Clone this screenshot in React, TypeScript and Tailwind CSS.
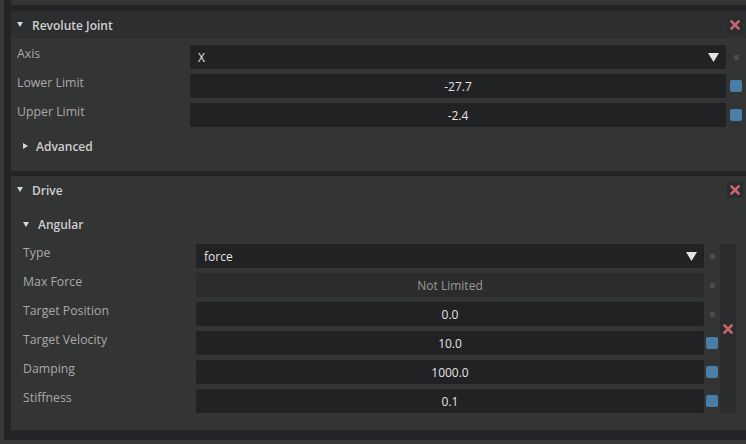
import React from 'react';

const CloseIcon = ({ boxed = true }: { boxed?: boolean }) => (
  <div
    className={`w-[16px] h-[16px] flex items-center justify-center rounded-[2px] ${boxed ? 'bg-[#2a2b2c]' : ''}`}
  >
    <svg width="10" height="10" viewBox="0 0 10 10">
      <path d="M1.5 1.5 L8.5 8.5 M8.5 1.5 L1.5 8.5" stroke="#c7636c" strokeWidth="2.6" strokeLinecap="square" />
    </svg>
  </div>
);

const CaretDown = () => (
  <svg width="6" height="5" viewBox="0 0 6 5">
    <path d="M0 0 L6 0 L3 5 Z" fill="#d8d8d8" />
  </svg>
);

const CaretRight = () => (
  <svg width="5" height="6" viewBox="0 0 5 6">
    <path d="M0 0 L5 3 L0 6 Z" fill="#d8d8d8" />
  </svg>
);

const SelectArrow = () => (
  <svg width="11" height="9" viewBox="0 0 11 9">
    <path d="M0 0 L11 0 L5.5 9 Z" fill="#e2e2e2" />
  </svg>
);

const Indicator = ({ on }: { on: boolean }) =>
  on ? (
    <div className="w-[12px] h-[12px] rounded-[2px] bg-[#4a7fa7]" />
  ) : (
    <div className="w-[5px] h-[5px] rounded-[1px] bg-[#4b4c4c]" />
  );

type Field = {
  label: string;
  value: string;
  kind: 'select' | 'number' | 'disabled';
  on: boolean;
};

const FieldRow = ({ f, pad, labelW, col }: { f: Field; pad: string; labelW: string; col: string }) => (
  <div className={`flex h-[24px] ${pad}`}>
    <div className={`${labelW} shrink-0 text-[#a9a9a9] leading-[17px] text-[12.3px]`}>{f.label}</div>
    <div
      className={`flex-1 flex items-center rounded-[2px] ${
        f.kind === 'disabled' ? 'bg-[#2c2c2c]' : 'bg-[#212223]'
      } ${f.kind === 'select' ? 'pl-[8px] pr-[7px] justify-between' : 'justify-center'}`}
    >
      <span className={`pt-[2px] ${f.kind === 'disabled' ? 'text-[#9a9a9a]' : 'text-[#e4e4e4]'}`}>{f.value}</span>
      {f.kind === 'select' && <SelectArrow />}
    </div>
    <div className={`${col} shrink-0 flex items-center justify-center`}>
      <Indicator on={f.on} />
    </div>
  </div>
);

const jointFields: Field[] = [
  { label: 'Axis', value: 'X', kind: 'select', on: false },
  { label: 'Lower Limit', value: '-27.7', kind: 'number', on: true },
  { label: 'Upper Limit', value: '-2.4', kind: 'number', on: true },
];

const driveFields: Field[] = [
  { label: 'Type', value: 'force', kind: 'select', on: false },
  { label: 'Max Force', value: 'Not Limited', kind: 'disabled', on: false },
  { label: 'Target Position', value: '0.0', kind: 'number', on: false },
  { label: 'Target Velocity', value: '10.0', kind: 'number', on: true },
  { label: 'Damping', value: '1000.0', kind: 'number', on: true },
  { label: 'Stiffness', value: '0.1', kind: 'number', on: true },
];

export default function App() {
  return (
    <div className="w-[746px] h-[444px] overflow-hidden bg-[#373838] font-['Open_Sans',sans-serif] text-[12px]">
      <div className="ml-[4px] bg-[#232425] pl-[7px] pb-[10px] flex flex-col">
        {/* tail of the panel above */}
        <div className="h-[5px] bg-[#333434]" />

        {/* Revolute Joint */}
        <section className="mt-[6px] h-[160px] bg-[#333434] flex flex-col">
          <div className="h-[27px] bg-[#2c2e2f] flex items-center pl-[6px] pr-[3px]">
            <CaretDown />
            <span className="ml-[9px] pt-[2px] text-[#cfcfcf] font-semibold">Revolute Joint</span>
            <div className="ml-auto">
              <CloseIcon />
            </div>
          </div>
          <div className="pt-[7px] flex flex-col gap-[5px]">
            {jointFields.map((f) => (
              <FieldRow key={f.label} f={f} pad="pl-[6px]" labelW="w-[173px]" col="w-[20px]" />
            ))}
          </div>
          <div className="mt-[10px] h-[18px] flex items-center pl-[12px]">
            <CaretRight />
            <span className="ml-[8px] pt-[2px] text-[#cdcdcd] font-semibold">Advanced</span>
          </div>
        </section>

        {/* Drive */}
        <section className="mt-[5px] h-[254px] bg-[#333434] flex flex-col">
          <div className="h-[27px] flex items-center pl-[6px] pr-[3px]">
            <CaretDown />
            <span className="ml-[9px] pt-[3px] text-[#cfcfcf] font-semibold">Drive</span>
            <div className="ml-auto">
              <CloseIcon />
            </div>
          </div>
          <div className="mt-[12px] h-[18px] flex items-center pl-[12px]">
            <CaretDown />
            <span className="ml-[9px] pt-[2px] text-[#cdcdcd] font-semibold">Angular</span>
          </div>
          <div className="mt-[11px] flex pr-[10px]">
            <div className="flex-1 flex flex-col gap-[5px]">
              {driveFields.map((f) => (
                <FieldRow key={f.label} f={f} pad="pl-[12px]" labelW="w-[173px]" col="w-[16px]" />
              ))}
            </div>
            <div className="w-[16px] rounded-[2px] bg-[#2b2c2d] flex items-center justify-center">
              <CloseIcon boxed={false} />
            </div>
          </div>
        </section>
      </div>
    </div>
  );
}
